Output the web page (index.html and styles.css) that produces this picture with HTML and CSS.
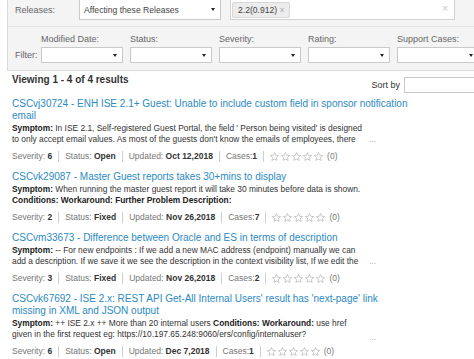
FILE: index.html
```html
<!DOCTYPE html>
<html>
<head>
<meta charset="utf-8">
<link rel="stylesheet" href="styles.css">
</head>
<body>
<div class="panel">
  <div class="rel-row">
    <span class="rel-label">Releases:</span>
    <div class="select rel-select"><span class="sel-text">Affecting these Releases</span><i class="arrow"></i></div>
    <div class="tagbox">
      <span class="tag">2.2(0.912) <span class="tag-x">×</span></span>
      <span class="clear">×</span>
    </div>
  </div>
  <div class="filter-row">
    <span class="filter-label">Filter:</span>
    <div class="fcol"><span class="flabel">Modified Date:</span><div class="select"><i class="arrow"></i></div></div>
    <div class="fcol"><span class="flabel">Status:</span><div class="select"><i class="arrow"></i></div></div>
    <div class="fcol"><span class="flabel">Severity:</span><div class="select"><i class="arrow"></i></div></div>
    <div class="fcol"><span class="flabel">Rating:</span><div class="select"><i class="arrow"></i></div></div>
    <div class="fcol"><span class="flabel">Support Cases:</span><div class="select"><i class="arrow"></i></div></div>
  </div>
</div>

<div class="toolbar">
  <div class="viewing">Viewing 1 - 4 of 4 results</div>
  <div class="sort"><span>Sort by</span><div class="sort-input"></div></div>
</div>

<ul class="results">
  <li class="result">
    <a class="title">CSCvj30724 - ENH ISE 2.1+ Guest: Unable to include custom field in sponsor notification email</a>
    <div class="sym">
      <div class="sym-text"><b>Symptom:</b> In ISE 2.1, Self-registered Guest Portal, the field ' Person being visited' is designed<br>to only accept email values. As most of the guests don't know the emails of employees, there</div>
      <span class="more">...</span>
    </div>
    <div class="meta">
      <span>Severity: <b>6</b></span><i class="sep"></i>
      <span>Status: <b>Open</b></span><i class="sep"></i>
      <span>Updated: <b>Oct 12,2018</b></span><i class="sep"></i>
      <span>Cases:<b>1</b></span><i class="sep"></i>
      <span class="stars">
        <svg viewBox="0 0 10 10"><polygon points="5,0.6 6.3,3.6 9.6,3.9 7.1,6.1 7.9,9.4 5,7.7 2.1,9.4 2.9,6.1 0.4,3.9 3.7,3.6"/></svg><svg viewBox="0 0 10 10"><polygon points="5,0.6 6.3,3.6 9.6,3.9 7.1,6.1 7.9,9.4 5,7.7 2.1,9.4 2.9,6.1 0.4,3.9 3.7,3.6"/></svg><svg viewBox="0 0 10 10"><polygon points="5,0.6 6.3,3.6 9.6,3.9 7.1,6.1 7.9,9.4 5,7.7 2.1,9.4 2.9,6.1 0.4,3.9 3.7,3.6"/></svg><svg viewBox="0 0 10 10"><polygon points="5,0.6 6.3,3.6 9.6,3.9 7.1,6.1 7.9,9.4 5,7.7 2.1,9.4 2.9,6.1 0.4,3.9 3.7,3.6"/></svg><svg viewBox="0 0 10 10"><polygon points="5,0.6 6.3,3.6 9.6,3.9 7.1,6.1 7.9,9.4 5,7.7 2.1,9.4 2.9,6.1 0.4,3.9 3.7,3.6"/></svg>
        <span class="count">(0)</span>
      </span>
    </div>
  </li>
  <li class="result">
    <a class="title">CSCvk29087 - Master Guest reports takes 30+mins to display</a>
    <div class="sym">
      <div class="sym-text"><b>Symptom:</b> When running the master guest report it will take 30 minutes before data is shown.<br><b>Conditions: Workaround: Further Problem Description:</b></div>
    </div>
    <div class="meta">
      <span>Severity: <b>2</b></span><i class="sep"></i>
      <span>Status: <b>Fixed</b></span><i class="sep"></i>
      <span>Updated: <b>Nov 26,2018</b></span><i class="sep"></i>
      <span>Cases:<b>7</b></span><i class="sep"></i>
      <span class="stars">
        <svg viewBox="0 0 10 10"><polygon points="5,0.6 6.3,3.6 9.6,3.9 7.1,6.1 7.9,9.4 5,7.7 2.1,9.4 2.9,6.1 0.4,3.9 3.7,3.6"/></svg><svg viewBox="0 0 10 10"><polygon points="5,0.6 6.3,3.6 9.6,3.9 7.1,6.1 7.9,9.4 5,7.7 2.1,9.4 2.9,6.1 0.4,3.9 3.7,3.6"/></svg><svg viewBox="0 0 10 10"><polygon points="5,0.6 6.3,3.6 9.6,3.9 7.1,6.1 7.9,9.4 5,7.7 2.1,9.4 2.9,6.1 0.4,3.9 3.7,3.6"/></svg><svg viewBox="0 0 10 10"><polygon points="5,0.6 6.3,3.6 9.6,3.9 7.1,6.1 7.9,9.4 5,7.7 2.1,9.4 2.9,6.1 0.4,3.9 3.7,3.6"/></svg><svg viewBox="0 0 10 10"><polygon points="5,0.6 6.3,3.6 9.6,3.9 7.1,6.1 7.9,9.4 5,7.7 2.1,9.4 2.9,6.1 0.4,3.9 3.7,3.6"/></svg>
        <span class="count">(0)</span>
      </span>
    </div>
  </li>
  <li class="result">
    <a class="title">CSCvm33673 - Difference between Oracle and ES in terms of description</a>
    <div class="sym">
      <div class="sym-text"><b>Symptom:</b> -- For new endpoints : If we add a new MAC address (endpoint) manually we can<br>add a description. If we save it we see the description in the context visibility list, If we edit the</div>
      <span class="more">...</span>
    </div>
    <div class="meta">
      <span>Severity: <b>3</b></span><i class="sep"></i>
      <span>Status: <b>Fixed</b></span><i class="sep"></i>
      <span>Updated: <b>Nov 26,2018</b></span><i class="sep"></i>
      <span>Cases:<b>2</b></span><i class="sep"></i>
      <span class="stars">
        <svg viewBox="0 0 10 10"><polygon points="5,0.6 6.3,3.6 9.6,3.9 7.1,6.1 7.9,9.4 5,7.7 2.1,9.4 2.9,6.1 0.4,3.9 3.7,3.6"/></svg><svg viewBox="0 0 10 10"><polygon points="5,0.6 6.3,3.6 9.6,3.9 7.1,6.1 7.9,9.4 5,7.7 2.1,9.4 2.9,6.1 0.4,3.9 3.7,3.6"/></svg><svg viewBox="0 0 10 10"><polygon points="5,0.6 6.3,3.6 9.6,3.9 7.1,6.1 7.9,9.4 5,7.7 2.1,9.4 2.9,6.1 0.4,3.9 3.7,3.6"/></svg><svg viewBox="0 0 10 10"><polygon points="5,0.6 6.3,3.6 9.6,3.9 7.1,6.1 7.9,9.4 5,7.7 2.1,9.4 2.9,6.1 0.4,3.9 3.7,3.6"/></svg><svg viewBox="0 0 10 10"><polygon points="5,0.6 6.3,3.6 9.6,3.9 7.1,6.1 7.9,9.4 5,7.7 2.1,9.4 2.9,6.1 0.4,3.9 3.7,3.6"/></svg>
        <span class="count">(0)</span>
      </span>
    </div>
  </li>
  <li class="result">
    <a class="title">CSCvk67692 - ISE 2.x: REST API Get-All Internal Users' result has 'next-page' link missing in XML and JSON output</a>
    <div class="sym">
      <div class="sym-text"><b>Symptom:</b> ++ ISE 2.x ++ More than 20 internal users <b>Conditions:</b> <b>Workaround:</b> use href<br>given in the first request eg: https://10.197.65.248:9060/ers/config/internaluser?</div>
      <span class="more more-low">...</span>
    </div>
    <div class="meta">
      <span>Severity: <b>6</b></span><i class="sep"></i>
      <span>Status: <b>Open</b></span><i class="sep"></i>
      <span>Updated: <b>Dec 7,2018</b></span><i class="sep"></i>
      <span>Cases:<b>1</b></span><i class="sep"></i>
      <span class="stars">
        <svg viewBox="0 0 10 10"><polygon points="5,0.6 6.3,3.6 9.6,3.9 7.1,6.1 7.9,9.4 5,7.7 2.1,9.4 2.9,6.1 0.4,3.9 3.7,3.6"/></svg><svg viewBox="0 0 10 10"><polygon points="5,0.6 6.3,3.6 9.6,3.9 7.1,6.1 7.9,9.4 5,7.7 2.1,9.4 2.9,6.1 0.4,3.9 3.7,3.6"/></svg><svg viewBox="0 0 10 10"><polygon points="5,0.6 6.3,3.6 9.6,3.9 7.1,6.1 7.9,9.4 5,7.7 2.1,9.4 2.9,6.1 0.4,3.9 3.7,3.6"/></svg><svg viewBox="0 0 10 10"><polygon points="5,0.6 6.3,3.6 9.6,3.9 7.1,6.1 7.9,9.4 5,7.7 2.1,9.4 2.9,6.1 0.4,3.9 3.7,3.6"/></svg><svg viewBox="0 0 10 10"><polygon points="5,0.6 6.3,3.6 9.6,3.9 7.1,6.1 7.9,9.4 5,7.7 2.1,9.4 2.9,6.1 0.4,3.9 3.7,3.6"/></svg>
        <span class="count">(0)</span>
      </span>
    </div>
  </li>
</ul>
</body>
</html>
```

FILE: styles.css
```css
html, body {
  overflow: hidden;
}
body {
  margin: 0;
  background: #fff;
  font-family: "Liberation Sans", Arial, sans-serif;
  color: #333;
}

/* filter panel */
.panel {
  margin-left: 7px;
  height: 71px;
  box-sizing: border-box;
  background: #f4f4f4;
  border-left: 1px solid #dadada;
  border-bottom: 1px solid #dadada;
}
.rel-row {
  display: flex;
  align-items: flex-start;
  height: 27px;
  box-sizing: border-box;
  padding-left: 7px;
  border-bottom: 1px solid #e3e3e3;
}
.rel-label {
  width: 64px;
  font-size: 9px;
  line-height: 20px;
  color: #666;
}
.select {
  position: relative;
  box-sizing: border-box;
  height: 16px;
  background: #fff;
  border: 1px solid #c9c9c9;
}
.rel-select {
  width: 142px;
  height: 22px;
  margin-top: -2px;
  padding-left: 4px;
}
.sel-text {
  font-size: 8.6px;
  line-height: 20px;
  color: #444;
}
.arrow {
  position: absolute;
  right: 5px;
  top: 50%;
  margin-top: -1px;
  border-left: 2.5px solid transparent;
  border-right: 2.5px solid transparent;
  border-top: 3.5px solid #222;
}
.tagbox {
  display: flex;
  align-items: flex-start;
  justify-content: space-between;
  box-sizing: border-box;
  width: 225px;
  height: 22px;
  margin-top: -2px;
  margin-left: 9px;
  background: #fff;
  border: 1px solid #d2d2d2;
}
.tag {
  margin-top: 3px;
  margin-left: 1px;
  padding: 0 4px 0 5px;
  height: 14px;
  line-height: 14px;
  font-size: 8.6px;
  color: #444;
  background: #ececec;
  border: 1px solid #d8d8d8;
  border-radius: 2px;
}
.tag-x {
  color: #aaa;
}
.clear {
  margin: 3px 6px 0 0;
  font-size: 10px;
  line-height: 14px;
  color: #c4c4c4;
}
.filter-row {
  display: flex;
  gap: 7px;
  padding-left: 7px;
}
.filter-label {
  width: 19px;
  padding-top: 20px;
  font-size: 9px;
  line-height: 16px;
  color: #666;
}
.fcol {
  width: 82px;
  flex: none;
}
.flabel {
  display: block;
  padding-top: 6px;
  font-size: 9px;
  line-height: 12px;
  color: #666;
}
.fcol .select {
  margin-top: 2px;
}

/* toolbar */
.toolbar {
  display: flex;
  justify-content: space-between;
  align-items: flex-start;
  margin-top: 3px;
  padding-left: 12px;
}
.viewing {
  font-size: 10px;
  font-weight: bold;
  line-height: 12px;
  color: #333;
}
.sort {
  display: flex;
  align-items: center;
  gap: 4px;
  margin-top: 3px;
  font-size: 9px;
  color: #333;
}
.sort-input {
  width: 72px;
  height: 16px;
  margin-right: -2px;
  box-sizing: border-box;
  background: #fff;
  border: 1px solid #c9c9c9;
}

/* results */
.results {
  list-style: none;
  margin: 5px 0 0;
  padding: 0 0 0 12px;
  width: 398px;
}
.result {
  margin-bottom: 9px;
}
.title {
  display: block;
  font-size: 10px;
  line-height: 12px;
  color: #2b8ac4;
}
.sym {
  display: flex;
  align-items: flex-end;
  margin-top: 1px;
  font-size: 8.4px;
  line-height: 11px;
  color: #333;
}
.sym b {
  color: #222;
}
.sym-text {
  width: 355px;
  flex: none;
  white-space: nowrap;
}
.more {
  margin-left: 2px;
  color: #aaa;
}
.more-low {
  margin-bottom: -3px;
}
.meta {
  display: flex;
  align-items: center;
  margin-top: 5px;
  height: 12px;
  font-size: 8.5px;
  color: #777;
}
.meta b {
  color: #333;
}
.sep {
  width: 1px;
  height: 11px;
  margin: 0 6px;
  background: #cfcfcf;
}
.stars {
  display: flex;
  align-items: center;
}
.stars svg {
  width: 9px;
  height: 9px;
  margin-right: 2px;
  fill: none;
  stroke: #b5b5b5;
  stroke-width: 0.8;
}
.count {
  margin-left: 2px;
  color: #777;
}
```
